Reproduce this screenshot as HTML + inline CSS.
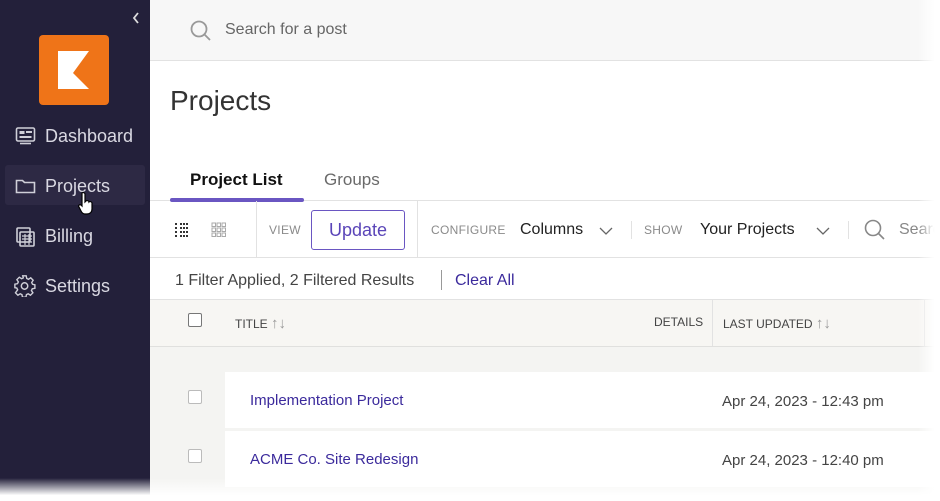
<!DOCTYPE html>
<html><head><meta charset="utf-8"><style>
*{margin:0;padding:0;box-sizing:border-box}
body{width:940px;height:501px;overflow:hidden;background:#fff;font-family:"Liberation Sans",sans-serif;position:relative}
.a{position:absolute;white-space:nowrap}
.sb{left:0;top:0;width:150px;height:501px;background:#23203a}
.nav{color:#d9d8e2;font-size:18px}
.ic{stroke:#cfcfd8;fill:none;stroke-width:1.6}
.lbl{font-size:12px;color:#8a8a8a;letter-spacing:.3px}
.dd{font-size:16px;color:#222}
</style></head><body>
<div class="a sb"></div>
<svg class="a" style="left:131px;top:11px" width="10" height="14"><path d="M7 2L3 7l4 5" stroke="#ddd" fill="none" stroke-width="1.8"/></svg>
<div class="a" style="left:39px;top:35px;width:70px;height:70px;background:#ef7418;border-radius:4px"></div>
<svg class="a" style="left:39px;top:35px" width="70" height="70"><polygon points="19,16 50,16 34,38 50,54 19,54" fill="#fff"/></svg>
<div class="a" style="left:5px;top:165px;width:140px;height:40px;background:#2d2944;border-radius:3px"></div>
<svg class="a" style="left:15px;top:126px" width="22" height="20"><rect class="ic" x="1.5" y="2" width="18" height="13" rx="1.5"/><rect x="4.5" y="5" width="5" height="3" fill="#cfcfd8"/><rect x="11" y="5" width="6" height="2" fill="#cfcfd8"/><rect x="4.5" y="10" width="12" height="2" fill="#cfcfd8"/><line class="ic" x1="5" y1="17.5" x2="16" y2="17.5"/></svg>
<div class="a nav" style="left:45px;top:126px">Dashboard</div>
<svg class="a" style="left:15px;top:177px" width="22" height="18"><path class="ic" d="M1.5 3.5h6l2 2h10v10h-18z"/></svg>
<div class="a nav" style="left:45px;top:176px">Projects</div>
<svg class="a" style="left:78px;top:191px" width="16" height="24"><path d="M4 2c1-1 3 0 3 1v8l1-1c1-1 3 0 3 1c1-1 3 0 3 1v6c0 3-2 5-5 5h-2c-2 0-3-1-4-3l-2-4c-1-1 0-3 2-2l1 1v-12z" fill="#fff" stroke="#000" stroke-width="1.2"/></svg>
<svg class="a" style="left:15px;top:226px" width="22" height="22"><rect class="ic" x="2" y="2" width="13" height="14" rx="1"/><rect class="ic" x="5" y="6" width="14" height="14" rx="1" fill="#23203a"/><path d="M7 10h10M7 13h10M7 16h10M10 8v11M14 8v11" stroke="#cfcfd8" stroke-width="1.2"/></svg>
<div class="a nav" style="left:45px;top:226px">Billing</div>
<svg class="a" style="left:14px;top:275px" width="22" height="22" viewBox="0 0 24 24"><path class="ic" d="M10 2h4l.6 3 2 1 2.6-1.7 2.8 2.8L20.3 9.7l1 2 2.7.6v4l-3 .6-1 2 1.7 2.6-2.8 2.8-2.6-1.7-2 1-.6 3h-4l-.6-3-2-1-2.6 1.7-2.8-2.8L4.2 18l-1-2L1 15.6v-4l3-.6 1-2L3.3 6.4l2.8-2.8L8.7 5.3l2-1z" transform="translate(0 -1) scale(.95)"/><circle class="ic" cx="11.5" cy="12" r="3.5"/></svg>
<div class="a nav" style="left:45px;top:276px">Settings</div>

<div class="a" style="left:150px;top:0;width:790px;height:61px;background:#f7f7f7;border-bottom:1px solid #e2e2e2"></div>
<svg class="a" style="left:189px;top:19px" width="24" height="24"><circle cx="10" cy="10" r="7.5" stroke="#999" stroke-width="1.8" fill="none"/><line x1="15.5" y1="15.5" x2="21" y2="21" stroke="#999" stroke-width="1.8"/></svg>
<div class="a" style="left:225px;top:21px;font-size:16px;color:#666">Search for a post</div>
<div class="a" style="left:170px;top:85px;font-size:28px;color:#333">Projects</div>
<div class="a" style="left:190px;top:170px;font-size:17px;color:#111;font-weight:bold">Project List</div>
<div class="a" style="left:324px;top:170px;font-size:17px;color:#6a6a6a">Groups</div>
<div class="a" style="left:150px;top:200px;width:790px;height:1px;background:#e2e2e2"></div>
<div class="a" style="left:170px;top:198px;width:134px;height:4px;background:#6a56c2;border-radius:2px"></div>
<div class="a" style="left:256px;top:201px;width:1px;height:57px;background:#e2e2e2"></div>
<div class="a" style="left:417px;top:201px;width:1px;height:57px;background:#e2e2e2"></div>
<div class="a" style="left:631px;top:221px;width:1px;height:18px;background:#e2e2e2"></div>
<div class="a" style="left:848px;top:221px;width:1px;height:18px;background:#e2e2e2"></div>
<svg class="a" style="left:174px;top:222px" width="16" height="16"><path d="M1 2h3M6 2h9M1 6h3M6 6h9M1 10h3M6 10h9M1 14h3M6 14h9" stroke="#333" stroke-width="2" stroke-dasharray="2 1"/></svg>
<svg class="a" style="left:211px;top:222px" width="16" height="16"><g fill="none" stroke="#aaa" stroke-width="1"><rect x="1" y="1" width="3.5" height="3.5"/><rect x="6" y="1" width="3.5" height="3.5"/><rect x="11" y="1" width="3.5" height="3.5"/><rect x="1" y="6" width="3.5" height="3.5"/><rect x="6" y="6" width="3.5" height="3.5"/><rect x="11" y="6" width="3.5" height="3.5"/><rect x="1" y="11" width="3.5" height="3.5"/><rect x="6" y="11" width="3.5" height="3.5"/><rect x="11" y="11" width="3.5" height="3.5"/></g></svg>
<div class="a lbl" style="left:269px;top:223px">VIEW</div>
<div class="a" style="left:311px;top:210px;width:94px;height:40px;border:1.5px solid #6a56c2;border-radius:3px;color:#5a45b8;font-size:18px;text-align:center;line-height:38px">Update</div>
<div class="a lbl" style="left:431px;top:223px">CONFIGURE</div>
<div class="a dd" style="left:520px;top:221px">Columns</div>
<svg class="a" style="left:598px;top:226px" width="16" height="10"><path d="M2 2l6 6 6-6" stroke="#666" fill="none" stroke-width="1.3"/></svg>
<div class="a lbl" style="left:644px;top:223px">SHOW</div>
<div class="a dd" style="left:700px;top:221px">Your Projects</div>
<svg class="a" style="left:815px;top:226px" width="16" height="10"><path d="M2 2l6 6 6-6" stroke="#666" fill="none" stroke-width="1.3"/></svg>
<svg class="a" style="left:863px;top:218px" width="24" height="24"><circle cx="10" cy="10" r="7.5" stroke="#888" stroke-width="1.6" fill="none"/><line x1="15.5" y1="15.5" x2="21" y2="21" stroke="#888" stroke-width="1.6"/></svg>
<div class="a" style="left:899px;top:221px;font-size:16px;color:#888">Search</div>
<div class="a" style="left:150px;top:257px;width:790px;height:1px;background:#e2e2e2"></div>
<div class="a" style="left:175px;top:272px;font-size:16px;color:#444">1 Filter Applied, 2 Filtered Results</div>
<div class="a" style="left:441px;top:270px;width:1px;height:20px;background:#999"></div>
<div class="a" style="left:455px;top:272px;font-size:16px;color:#3b2a9c">Clear All</div>
<div class="a" style="left:150px;top:299px;width:790px;height:48px;background:#f7f6f3;border-top:1px solid #e2e2e2;border-bottom:1px solid #e0e0de"></div>
<div class="a" style="left:712px;top:300px;width:1px;height:46px;background:#e2e2e2"></div>
<div class="a" style="left:924px;top:300px;width:1px;height:46px;background:#e2e2e2"></div>
<div class="a" style="left:188px;top:313px;width:14px;height:14px;border:1.5px solid #777;border-radius:2px;background:#fff"></div>
<div class="a" style="left:235px;top:315px;font-size:12px;color:#444">TITLE <span style="color:#999;font-size:15px">↑↓</span></div>
<div class="a" style="left:654px;top:315px;font-size:12px;color:#444">DETAILS</div>
<div class="a" style="left:723px;top:315px;font-size:12px;color:#444">LAST UPDATED <span style="color:#999;font-size:15px">↑↓</span></div>
<div class="a" style="left:150px;top:347px;width:790px;height:154px;background:#f4f4f2"></div>
<div class="a" style="left:225px;top:372px;width:715px;height:56px;background:#fff"></div>
<div class="a" style="left:225px;top:431px;width:715px;height:56px;background:#fff"></div>
<div class="a" style="left:188px;top:390px;width:14px;height:14px;border:1px solid #bbb;border-radius:2px;background:#fff"></div>
<div class="a" style="left:188px;top:449px;width:14px;height:14px;border:1px solid #bbb;border-radius:2px;background:#fff"></div>
<div class="a" style="left:250px;top:392px;font-size:15px;color:#3b2a9c">Implementation Project</div>
<div class="a" style="left:250px;top:451px;font-size:15px;color:#3b2a9c">ACME Co. Site Redesign</div>
<div class="a" style="left:722px;top:393px;font-size:15px;color:#444">Apr 24, 2023 - 12:43 pm</div>
<div class="a" style="left:722px;top:452px;font-size:15px;color:#444">Apr 24, 2023 - 12:40 pm</div>
<div class="a" style="left:918px;top:0;width:22px;height:501px;background:linear-gradient(to right,rgba(255,255,255,0),#fff 75%)"></div>
<div class="a" style="left:0;top:478px;width:940px;height:23px;background:linear-gradient(to bottom,rgba(255,255,255,0),#fff 75%)"></div>
</body></html>
